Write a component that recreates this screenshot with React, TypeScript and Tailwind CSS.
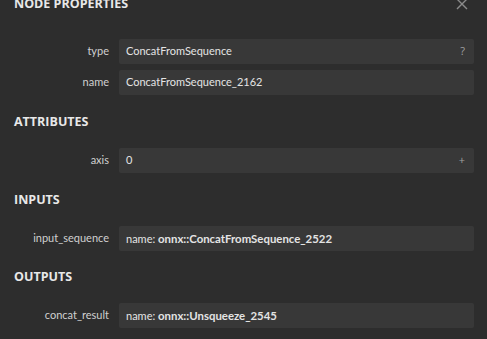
import React from "react";

const font = { fontFamily: '"Open Sans", "Noto Sans", sans-serif' };
const body = { fontFamily: 'Lato, "Open Sans", sans-serif' };

function Row({ label, children, icon }: { label: string; children: React.ReactNode; icon?: string }) {
  return (
    <div className="flex items-center" style={body}>
      <div className="w-[105px] shrink-0 text-right pr-[10px] text-[11px] text-[#d0d0d0]">{label}</div>
      <div className="flex-1 h-[25px] rounded-[2px] bg-[#383838] flex items-center justify-between pl-[7px] pr-[9px] text-[11px] text-[#e4e4e4]">
        <span>{children}</span>
        {icon ? <span className="text-[11px] text-[#a0a0a0]" style={font}>{icon}</span> : null}
      </div>
    </div>
  );
}

function Section({ title }: { title: string }) {
  return <div className="text-[12.5px] font-bold leading-[18px] text-[#e8e8e8]">{title}</div>;
}

export default function App() {
  return (
    <div style={font} className="w-[487px] h-[339px] overflow-hidden bg-[#2d2d2d] pl-[14px] pr-[13px]">
      <div className="-mt-[5px] flex items-center justify-between">
        <div className="text-[12.5px] font-bold leading-[18px] text-[#e8e8e8]">NODE PROPERTIES</div>
        <svg width="12" height="12" viewBox="0 0 12 12" className="mr-[6px] -mt-[1px]">
          <path d="M1 1L11 11M11 1L1 11" stroke="#8a8a8a" strokeWidth="1.4" />
        </svg>
      </div>
      <div className="mt-[26px] flex flex-col gap-[6px]">
        <Row label="type" icon="?">ConcatFromSequence</Row>
        <Row label="name">ConcatFromSequence_2162</Row>
      </div>
      <div className="mt-[18px]">
        <Section title="ATTRIBUTES" />
      </div>
      <div className="mt-[17px]">
        <Row label="axis" icon="+">0</Row>
      </div>
      <div className="mt-[18px]">
        <Section title="INPUTS" />
      </div>
      <div className="mt-[17px]">
        <Row label="input_sequence">
          name: <b className="font-bold text-[11.4px]">onnx::ConcatFromSequence_2522</b>
        </Row>
      </div>
      <div className="mt-[17px]">
        <Section title="OUTPUTS" />
      </div>
      <div className="mt-[17px]">
        <Row label="concat_result">
          name: <b className="font-bold text-[11.4px]">onnx::Unsqueeze_2545</b>
        </Row>
      </div>
    </div>
  );
}
